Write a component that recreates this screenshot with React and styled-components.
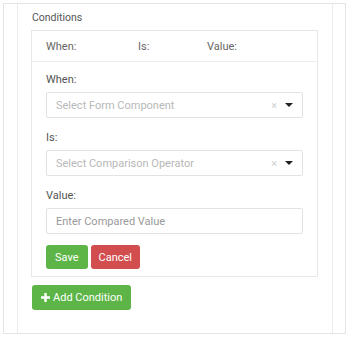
import React from "react";
import styled, { createGlobalStyle } from "styled-components";

const Global = createGlobalStyle`
  body {
    margin: 0;
    background: #ffffff;
    font-family: Roboto, "Liberation Sans", sans-serif;
  }
`;

const Panel = styled.div`
  margin: 3px 0 0 3px;
  width: 343px;
  height: 331px;
  border: 1px solid #e4e4e4;
  padding: 0 12px 0 13px;
  box-sizing: border-box;
  display: flex;
`;

const Column = styled.div`
  flex: 1;
  border-left: 1px solid #ececec;
  border-right: 1px solid #ececec;
  padding: 7px 14px 0 13px;
`;

const Title = styled.div`
  font-size: 10.5px;
  line-height: 14px;
  color: #555;
  margin-left: 1px;
  margin-bottom: 5px;
`;

const Table = styled.div`
  border: 1px solid #e8e8e8;
`;

const HeaderRow = styled.div`
  display: grid;
  grid-template-columns: 92px 69px 1fr;
  height: 30px;
  align-items: center;
  padding-left: 14px;
  border-bottom: 1px solid #ececec;
  font-size: 11px;
  color: #666;
`;

const Body = styled.div`
  padding: 11px 14px 7px 14px;
`;

const Label = styled.div`
  font-size: 11px;
  line-height: 14px;
  color: #555;
  margin-top: ${(p) => (p.$first ? 0 : 13)}px;
  margin-bottom: 5px;
`;

const Field = styled.div`
  box-sizing: border-box;
  height: 26px;
  border: 1px solid #e2e2e2;
  border-radius: 2px;
  display: flex;
  align-items: center;
  padding: 0 9px 0 9px;
  font-size: 11px;
  color: #aaa;
`;

const Placeholder = styled.span`
  flex: 1;
  color: ${(p) => (p.$dark ? "#999" : "#b8b8b8")};
`;

const Clear = styled.span`
  color: #d0d0d0;
  font-size: 11px;
  margin-right: 8px;
`;

const Caret = styled.span`
  width: 0;
  height: 0;
  border-left: 4px solid transparent;
  border-right: 4px solid transparent;
  border-top: 4px solid #222;
`;

const Buttons = styled.div`
  display: flex;
  gap: 3px;
  margin-top: 11px;
`;

const Button = styled.button`
  height: ${(p) => p.$h || 24}px;
  padding: 0 ${(p) => p.$px || 9}px;
  border: none;
  border-radius: 3px;
  background: ${(p) => (p.$danger ? "#d24d4d" : "#5cb546")};
  color: #fff;
  font-family: Roboto, "Liberation Sans", sans-serif;
  font-size: 11px;
  display: flex;
  align-items: center;
  gap: 3px;
`;

const AddWrap = styled.div`
  margin-top: 8px;
  margin-left: 1px;
`;

const Plus = () => (
  <svg width="9" height="9" viewBox="0 0 9 9">
    <path d="M3.3 0h2.4v3.3H9v2.4H5.7V9H3.3V5.7H0V3.3h3.3z" fill="#fff" />
  </svg>
);

const Select = ({ text }) => (
  <Field>
    <Placeholder>{text}</Placeholder>
    <Clear>×</Clear>
    <Caret />
  </Field>
);

export default function App() {
  return (
    <>
      <Global />
      <Panel>
        <Column>
          <Title>Conditions</Title>
          <Table>
            <HeaderRow>
              <span>When:</span>
              <span>Is:</span>
              <span>Value:</span>
            </HeaderRow>
            <Body>
              <Label $first>When:</Label>
              <Select text="Select Form Component" />
              <Label>Is:</Label>
              <Select text="Select Comparison Operator" />
              <Label>Value:</Label>
              <Field>
                <Placeholder $dark>Enter Compared Value</Placeholder>
              </Field>
              <Buttons>
                <Button $px={9}>Save</Button>
                <Button $danger $px={8}>Cancel</Button>
              </Buttons>
            </Body>
          </Table>
          <AddWrap>
            <Button $h={25} $px={9}>
              <Plus />
              Add Condition
            </Button>
          </AddWrap>
        </Column>
      </Panel>
    </>
  );
}
